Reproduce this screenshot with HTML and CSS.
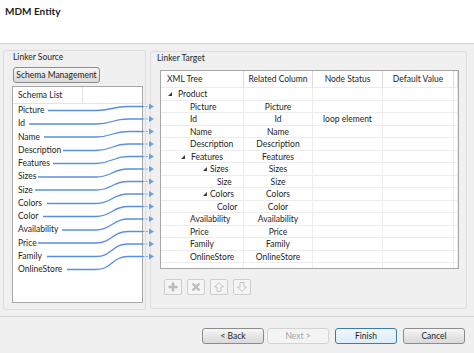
FILE: index.html
```html
<!DOCTYPE html>
<html lang="en">
<head>
    <meta charset="UTF-8">
    <title>MDM Entity</title>
    <link rel="stylesheet" href="styles.css">
</head>
<body>
    <div class="header">
        <div class="title">MDM Entity</div>
    </div>

    <div class="content">
        <div class="group group-source">
            <div class="group-label">Linker Source</div>
            <button class="btn btn-schema">Schema Management</button>
            <div class="schema-table">
                <div class="schema-head">
                    <div class="schema-head-cell">Schema List</div>
                </div>
                <div class="schema-row">Picture</div>
                <div class="schema-row">Id</div>
                <div class="schema-row">Name</div>
                <div class="schema-row">Description</div>
                <div class="schema-row">Features</div>
                <div class="schema-row">Sizes</div>
                <div class="schema-row">Size</div>
                <div class="schema-row">Colors</div>
                <div class="schema-row">Color</div>
                <div class="schema-row">Availability</div>
                <div class="schema-row">Price</div>
                <div class="schema-row">Family</div>
                <div class="schema-row">OnlineStore</div>
            </div>
        </div>

        <div class="group group-target">
            <div class="group-label group-label-target">Linker Target</div>
            <div class="tree-table">
                <div class="tree-row tree-head">
                    <div class="cell cell-left">XML Tree</div>
                    <div class="cell">Related Column</div>
                    <div class="cell">Node Status</div>
                    <div class="cell">Default Value</div>
                    <div class="cell"></div>
                </div>
                <div class="tree-row">
                    <div class="cell cell-left lvl-0"><span class="twisty"></span>Product</div>
                    <div class="cell"></div><div class="cell"></div><div class="cell"></div><div class="cell"></div>
                </div>
                <div class="tree-row">
                    <div class="cell cell-left lvl-1">Picture</div>
                    <div class="cell">Picture</div><div class="cell"></div><div class="cell"></div><div class="cell"></div>
                </div>
                <div class="tree-row">
                    <div class="cell cell-left lvl-1">Id</div>
                    <div class="cell">Id</div><div class="cell">loop element</div><div class="cell"></div><div class="cell"></div>
                </div>
                <div class="tree-row">
                    <div class="cell cell-left lvl-1">Name</div>
                    <div class="cell">Name</div><div class="cell"></div><div class="cell"></div><div class="cell"></div>
                </div>
                <div class="tree-row">
                    <div class="cell cell-left lvl-1">Description</div>
                    <div class="cell">Description</div><div class="cell"></div><div class="cell"></div><div class="cell"></div>
                </div>
                <div class="tree-row">
                    <div class="cell cell-left lvl-1b"><span class="twisty"></span>Features</div>
                    <div class="cell">Features</div><div class="cell"></div><div class="cell"></div><div class="cell"></div>
                </div>
                <div class="tree-row">
                    <div class="cell cell-left lvl-2"><span class="twisty twisty-tight"></span>Sizes</div>
                    <div class="cell">Sizes</div><div class="cell"></div><div class="cell"></div><div class="cell"></div>
                </div>
                <div class="tree-row">
                    <div class="cell cell-left lvl-3">Size</div>
                    <div class="cell">Size</div><div class="cell"></div><div class="cell"></div><div class="cell"></div>
                </div>
                <div class="tree-row">
                    <div class="cell cell-left lvl-2"><span class="twisty twisty-tight"></span>Colors</div>
                    <div class="cell">Colors</div><div class="cell"></div><div class="cell"></div><div class="cell"></div>
                </div>
                <div class="tree-row">
                    <div class="cell cell-left lvl-3">Color</div>
                    <div class="cell">Color</div><div class="cell"></div><div class="cell"></div><div class="cell"></div>
                </div>
                <div class="tree-row">
                    <div class="cell cell-left lvl-1">Availability</div>
                    <div class="cell">Availability</div><div class="cell"></div><div class="cell"></div><div class="cell"></div>
                </div>
                <div class="tree-row">
                    <div class="cell cell-left lvl-1">Price</div>
                    <div class="cell">Price</div><div class="cell"></div><div class="cell"></div><div class="cell"></div>
                </div>
                <div class="tree-row">
                    <div class="cell cell-left lvl-1">Family</div>
                    <div class="cell">Family</div><div class="cell"></div><div class="cell"></div><div class="cell"></div>
                </div>
                <div class="tree-row">
                    <div class="cell cell-left lvl-1">OnlineStore</div>
                    <div class="cell">OnlineStore</div><div class="cell"></div><div class="cell"></div><div class="cell"></div>
                </div>
                <div class="tree-row tree-filler">
                    <div class="cell"></div><div class="cell"></div><div class="cell"></div><div class="cell"></div><div class="cell"></div>
                </div>
            </div>

            <div class="tool-row">
                <span class="tool-btn">
                    <svg width="12" height="12" viewBox="0 0 12 12"><path d="M6 1.5v9M1.5 6h9" stroke="#bcbcbc" stroke-width="2.6"/></svg>
                </span>
                <span class="tool-btn">
                    <svg width="12" height="12" viewBox="0 0 12 12"><path d="M2.5 2.5l7 7M9.5 2.5l-7 7" stroke="#bcbcbc" stroke-width="2.4"/></svg>
                </span>
                <span class="tool-btn">
                    <svg width="12" height="12" viewBox="0 0 12 12"><path d="M6 1.5L10.5 6H8v4.5H4V6H1.5Z" fill="none" stroke="#c4c4c4" stroke-width="1"/></svg>
                </span>
                <span class="tool-btn">
                    <svg width="12" height="12" viewBox="0 0 12 12"><path d="M6 10.5L10.5 6H8V1.5H4V6H1.5Z" fill="none" stroke="#c4c4c4" stroke-width="1"/></svg>
                </span>
            </div>
        </div>
    </div>

    <div class="footer">
        <button class="btn btn-wizard">&lt; Back</button>
        <button class="btn btn-wizard btn-disabled">Next &gt;</button>
        <button class="btn btn-wizard btn-default">Finish</button>
        <button class="btn btn-wizard">Cancel</button>
    </div>

    <!-- schema-to-tree links drawn over both panels -->
    <svg class="links" width="160" height="353" viewBox="0 0 160 353">
        <g class="link-line">
            <path d="M48 110.5H96C112 110.5 112 106.5 128 106.5H143"/>
            <path d="M29 124H96C112 124 112 119 128 119H143"/>
            <path d="M44 137H96C112 137 112 131.5 128 131.5H143"/>
            <path d="M63 150.5H96C112 150.5 112 144 128 144H143"/>
            <path d="M53 163.5H96C112 163.5 112 156.5 128 156.5H143"/>
            <path d="M38 177H96C112 177 112 169 128 169H143"/>
            <path d="M35 190H96C112 190 112 181.5 128 181.5H143"/>
            <path d="M47 203.5H96C112 203.5 112 194 128 194H143"/>
            <path d="M43 216.5H96C112 216.5 112 206.5 128 206.5H143"/>
            <path d="M62 230H96C112 230 112 219 128 219H143"/>
            <path d="M38 243H96C112 243 112 231.5 128 231.5H143"/>
            <path d="M47 256.5H96C112 256.5 112 244 128 244H143"/>
            <path d="M67 269.5H96C112 269.5 112 256.5 128 256.5H143"/>
        </g>
        <g class="link-dash">
            <path d="M143 106.5H149M143 119H149M143 131.5H149M143 144H149M143 156.5H149M143 169H149M143 181.5H149M143 194H149M143 206.5H149M143 219H149M143 231.5H149M143 244H149M143 256.5H149"/>
        </g>
        <g class="link-head">
            <path d="M149 103.5L154 106.5L149 109.5Z"/>
            <path d="M149 116L154 119L149 122Z"/>
            <path d="M149 128.5L154 131.5L149 134.5Z"/>
            <path d="M149 141L154 144L149 147Z"/>
            <path d="M149 153.5L154 156.5L149 159.5Z"/>
            <path d="M149 166L154 169L149 172Z"/>
            <path d="M149 178.5L154 181.5L149 184.5Z"/>
            <path d="M149 191L154 194L149 197Z"/>
            <path d="M149 203.5L154 206.5L149 209.5Z"/>
            <path d="M149 216L154 219L149 222Z"/>
            <path d="M149 228.5L154 231.5L149 234.5Z"/>
            <path d="M149 241L154 244L149 247Z"/>
            <path d="M149 253.5L154 256.5L149 259.5Z"/>
        </g>
    </svg>
</body>
</html>
```

FILE: styles.css
```css
body {
    margin: 0;
    width: 474px;
    height: 353px;
    overflow: hidden;
    position: relative;
    background: #f0f0f0;
    font-family: Lato, "Open Sans", sans-serif;
    font-size: 8.5px;
    color: #1e1e1e;
}

.header {
    height: 43px;
    background: #ffffff;
    border-bottom: 1px solid #d4d4d4;
}

.title {
    padding: 4px 0 0 5px;
    font-size: 10px;
    font-weight: bold;
    line-height: 14px;
}

.content {
    display: flex;
    gap: 4px;
    height: 272px;
    padding: 6px 0 0 3px;
    box-sizing: border-box;
}

.group {
    height: 260px;
    border: 1px solid #dddddd;
    border-radius: 3px;
    box-sizing: border-box;
}

.group-source {
    width: 143px;
    padding-left: 8px;
}

.group-target {
    width: 317px;
    padding-left: 9px;
    margin-top: 1px;
    height: 258px;
}

.group-label {
    height: 13px;
    line-height: 13px;
    margin-left: 1px;
}

.group-label-target {
    margin-left: -3px;
}

.btn {
    font-family: inherit;
    font-size: 8.5px;
    color: #1e1e1e;
    height: 16px;
    padding: 0;
    white-space: nowrap;
    border: 1px solid #8c8c8c;
    border-radius: 3px;
    background: linear-gradient(#f7f7f7, #e6e6e6 50%, #dadada);
    line-height: 13px;
}

.btn-schema {
    display: block;
    width: 87px;
    margin: 3px 0 0 1px;
}

.schema-table {
    width: 131px;
    height: 217px;
    margin-top: 3px;
    border: 1px solid #a7a7a7;
    background: #ffffff;
    box-sizing: border-box;
}

.schema-head {
    height: 17px;
    border-bottom: 1px solid #e4e4e4;
    box-sizing: border-box;
}

.schema-head-cell {
    width: 70px;
    height: 16px;
    line-height: 16px;
    padding-left: 5px;
    border-right: 1px solid #e4e4e4;
    box-sizing: border-box;
}

.schema-row {
    height: 13.25px;
    line-height: 13.25px;
    padding-left: 5px;
}

.tree-table {
    width: 299px;
    height: 199px;
    margin-top: 5px;
    border: 1px solid #a7a7a7;
    background: #ffffff;
    box-sizing: border-box;
    overflow: hidden;
}

.tree-row {
    display: grid;
    grid-template-columns: 83px 69px 70px 71px 1fr;
    height: 12.5px;
    line-height: 12px;
}

.tree-head {
    height: 17px;
    line-height: 16px;
}

.tree-head .cell {
    border-right-color: #dcdcdc;
}

.tree-filler {
    height: 10px;
}

.cell {
    text-align: center;
    white-space: nowrap;
    border-right: 1px solid #ececec;
    border-bottom: 1px solid #ececec;
    overflow: hidden;
}

.cell-left {
    text-align: left;
    padding-left: 6px;
}

.lvl-0 { padding-left: 7px; }
.lvl-1 { padding-left: 29px; }
.lvl-1b { padding-left: 20px; }
.lvl-2 { padding-left: 42px; }
.lvl-3 { padding-left: 56px; }

.twisty {
    display: inline-block;
    width: 0;
    height: 0;
    margin-right: 6px;
    border-left: 4px solid transparent;
    border-bottom: 4px solid #3a3a3a;
    vertical-align: 1px;
}

.twisty-tight {
    margin-right: 3px;
}

.tool-row {
    display: flex;
    gap: 5px;
    margin: 10px 0 0 4px;
}

.tool-btn {
    display: flex;
    align-items: center;
    justify-content: center;
    width: 18px;
    height: 16px;
    border: 1px solid #cdcdcd;
    border-radius: 2px;
    background: #f5f5f5;
    box-sizing: border-box;
}

.footer {
    display: flex;
    justify-content: flex-end;
    height: 37px;
    padding: 11px 9px 0 0;
    border-top: 1px solid #d2d2d2;
    box-sizing: border-box;
}

.btn-wizard {
    width: 62px;
    margin-left: 6px;
}

.btn-disabled {
    margin-left: 3px;
    color: #a3a3a3;
    border-color: #d3d3d3;
    background: #f4f4f4;
}

.btn-default {
    border-color: #3d7bad;
    background: linear-gradient(#eef7fd, #dcedf9);
}

.links {
    position: absolute;
    left: 0;
    top: 0;
}

.link-line path {
    fill: none;
    stroke: #5a8ee0;
    stroke-width: 1.3;
}

.link-dash path {
    fill: none;
    stroke: #6b9de6;
    stroke-width: 1.2;
    stroke-dasharray: 1.5 1.5;
}

.link-head path {
    fill: #6a9ee8;
}
```
